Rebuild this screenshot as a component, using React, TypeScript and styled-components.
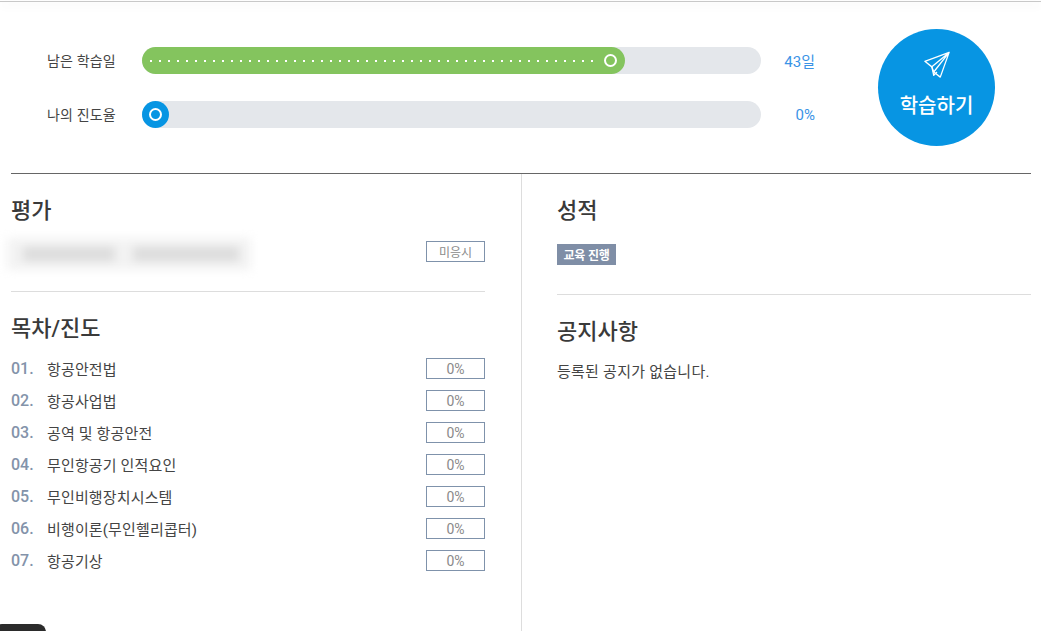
import { createGlobalStyle, styled } from 'styled-components'

const GlobalStyle = createGlobalStyle`
  html, body {
    margin: 0;
    height: 100%;
    overflow: hidden;
    background: #fff;
    font-family: Roboto, 'Noto Sans CJK KR', sans-serif;
    color: #333;
  }
`

const Page = styled.div`
  position: relative;
  display: flex;
  flex-direction: column;
  height: 631px;
  overflow: hidden;
`

const TopRule = styled.div`
  flex: none;
  height: 1px;
  margin-top: 1px;
  background: #c8c8c8;
  box-shadow: 0 3px 10px rgba(0, 0, 0, 0.14);
`

const Content = styled.div`
  flex: 1;
  display: flex;
  flex-direction: column;
  margin: 0 10px 0 11px;
  min-height: 0;
`

const Summary = styled.section`
  flex: none;
  display: flex;
  align-items: center;
  padding: 27px 0 27px 36px;
  border-bottom: 1px solid #666;
`

const Meters = styled.div`
  display: flex;
  flex-direction: column;
  gap: 27px;
  width: 768px;
`

const MeterRow = styled.div`
  display: flex;
  align-items: center;
  height: 27px;
`

const MeterLabel = styled.span`
  flex: none;
  width: 95px;
  padding-bottom: 2px;
  font-size: 14px;
  letter-spacing: 0.15px;
  color: #444;
`

const Track = styled.div`
  flex: none;
  width: 619px;
  height: 27px;
  border-radius: 14px;
  background: #e4e7eb;
`

const GreenFill = styled.div`
  display: flex;
  align-items: center;
  justify-content: flex-end;
  height: 100%;
  padding-right: 8px;
  box-sizing: border-box;
  border-radius: 14px;
  background: #84c45e;
`

const DotRun = styled.div`
  flex: 1;
  height: 2px;
  margin: 0 11px 0 8px;
  background-image: radial-gradient(circle at 1px 1px, #fff 1px, transparent 1.1px);
  background-size: 9px 2px;
  background-repeat: repeat-x;
`

const BlueKnob = styled.div`
  display: flex;
  align-items: center;
  justify-content: center;
  width: 27px;
  height: 27px;
  border-radius: 50%;
  background: #0795e3;
`

const Ring = styled.span`
  flex: none;
  width: 13px;
  height: 13px;
  box-sizing: border-box;
  border: 2.5px solid #fff;
  border-radius: 50%;
`

const MeterValue = styled.span`
  flex: none;
  width: 54px;
  text-align: right;
  font-size: 15px;
  color: #3a93e6;
`

const StudyButton = styled.button`
  flex: none;
  display: flex;
  flex-direction: column;
  align-items: center;
  width: 117px;
  height: 117px;
  margin-left: 63px;
  padding: 22px 0 0;
  border: 0;
  border-radius: 50%;
  background: #0795e3;
  color: #fff;
  font-family: inherit;
  font-size: 20px;
  font-weight: 500;
  line-height: 28px;
`

const PlaneIcon = styled.svg`
  width: 28px;
  height: 28px;
  margin-bottom: 13px;
`

const Columns = styled.div`
  flex: 1;
  display: grid;
  grid-template-columns: 511px 1fr;
  min-height: 0;
`

const LeftColumn = styled.div`
  padding: 21px 36px 0 0;
  border-right: 1px solid #ddd;
`

const RightColumn = styled.div`
  padding: 21px 0 0 35px;
`

const Heading = styled.h2`
  margin: 0;
  height: 30px;
  font-size: 22px;
  font-weight: 500;
  line-height: 32px;
  color: #3a3a3a;
`

const Divider = styled.hr`
  height: 1px;
  margin: 29px 0 21px;
  border: 0;
  background: #ddd;
`

const ExamRow = styled.div`
  position: relative;
  display: flex;
  align-items: center;
  justify-content: flex-end;
  height: 21px;
  margin-top: 16px;
`

const BlurredTitle = styled.div`
  position: absolute;
  left: -4px;
  top: -3px;
  display: flex;
  gap: 18px;
  align-items: center;
  width: 244px;
  height: 32px;
  padding: 0 16px;
  box-sizing: border-box;
  background: #f3f3f3;
  filter: blur(5px);
`

const BlurBlock = styled.span<{ $width: number }>`
  flex: none;
  width: ${(p) => p.$width}px;
  height: 14px;
  background: #dcdcdc;
`

const Status = styled.span<{ $numeric?: boolean }>`
  flex: none;
  display: flex;
  align-items: center;
  justify-content: center;
  width: 59px;
  height: 21px;
  box-sizing: border-box;
  border: 1px solid #7f92ab;
  font-size: ${(p) => (p.$numeric ? 14 : 12)}px;
  color: #8a8a8a;
`

const TocList = styled.ol`
  display: flex;
  flex-direction: column;
  gap: 11px;
  margin: 15px 0 0;
  padding: 0;
  list-style: none;
`

const TocRow = styled.li`
  display: flex;
  align-items: center;
  height: 21px;
`

const TocNumber = styled.span`
  flex: none;
  width: 36px;
  font-size: 16px;
  font-weight: 500;
  color: #8393aa;
`

const TocTitle = styled.span`
  flex: 1;
  font-size: 15px;
  letter-spacing: 0.15px;
  color: #444;
`

const ProgressTag = styled.span`
  display: inline-flex;
  align-items: center;
  justify-content: center;
  width: 59px;
  height: 21px;
  margin-top: 19px;
  background: #7f8ea6;
  color: #fff;
  font-size: 12px;
  font-weight: 700;
  letter-spacing: -0.2px;
`

const TagRow = styled.div`
  display: flex;
`

const EmptyNotice = styled.p`
  margin: 16px 0 0;
  font-size: 15px;
  letter-spacing: 0.25px;
  line-height: 21px;
  color: #444;
`

const CornerWidget = styled.div`
  position: absolute;
  left: -6px;
  bottom: -20px;
  width: 52px;
  height: 27px;
  border-radius: 8px;
  background: #2b2b2b;
`

const chapters = [
  '항공안전법',
  '항공사업법',
  '공역 및 항공안전',
  '무인항공기 인적요인',
  '무인비행장치시스템',
  '비행이론(무인헬리콥터)',
  '항공기상',
]

export default function App() {
  return (
    <>
      <GlobalStyle />
      <Page>
        <TopRule />
        <Content>
          <Summary>
            <Meters>
              <MeterRow>
                <MeterLabel>남은 학습일</MeterLabel>
                <Track>
                  <GreenFill style={{ width: 483 }}>
                    <DotRun />
                    <Ring />
                  </GreenFill>
                </Track>
                <MeterValue>43일</MeterValue>
              </MeterRow>
              <MeterRow>
                <MeterLabel>나의 진도율</MeterLabel>
                <Track>
                  <BlueKnob>
                    <Ring />
                  </BlueKnob>
                </Track>
                <MeterValue>0%</MeterValue>
              </MeterRow>
            </Meters>
            <StudyButton type="button">
              <PlaneIcon viewBox="0 0 30 30" fill="none" stroke="#fff" strokeWidth="1.4" strokeLinejoin="round">
                <path d="M28 1.500 2 11l7.500 6L28 1.500 18.500 28l-7-5.500L28 1.500Z" />
                <path d="M9.500 17l2 9 3.500-3.500" />
                <path d="M11.500 22.500 9.500 17" />
              </PlaneIcon>
              학습하기
            </StudyButton>
          </Summary>
          <Columns>
            <LeftColumn>
              <Heading>평가</Heading>
              <ExamRow>
                <BlurredTitle aria-hidden="true">
                  <BlurBlock $width={92} />
                  <BlurBlock $width={106} />
                </BlurredTitle>
                <Status>미응시</Status>
              </ExamRow>
              <Divider />
              <Heading>목차/진도</Heading>
              <TocList>
                {chapters.map((title, i) => (
                  <TocRow key={title}>
                    <TocNumber>{`0${i + 1}.`}</TocNumber>
                    <TocTitle>{title}</TocTitle>
                    <Status $numeric>0%</Status>
                  </TocRow>
                ))}
              </TocList>
            </LeftColumn>
            <RightColumn>
              <Heading>성적</Heading>
              <TagRow>
                <ProgressTag>교육 진행</ProgressTag>
              </TagRow>
              <Divider />
              <Heading>공지사항</Heading>
              <EmptyNotice>등록된 공지가 없습니다.</EmptyNotice>
            </RightColumn>
          </Columns>
        </Content>
        <CornerWidget />
      </Page>
    </>
  )
}
